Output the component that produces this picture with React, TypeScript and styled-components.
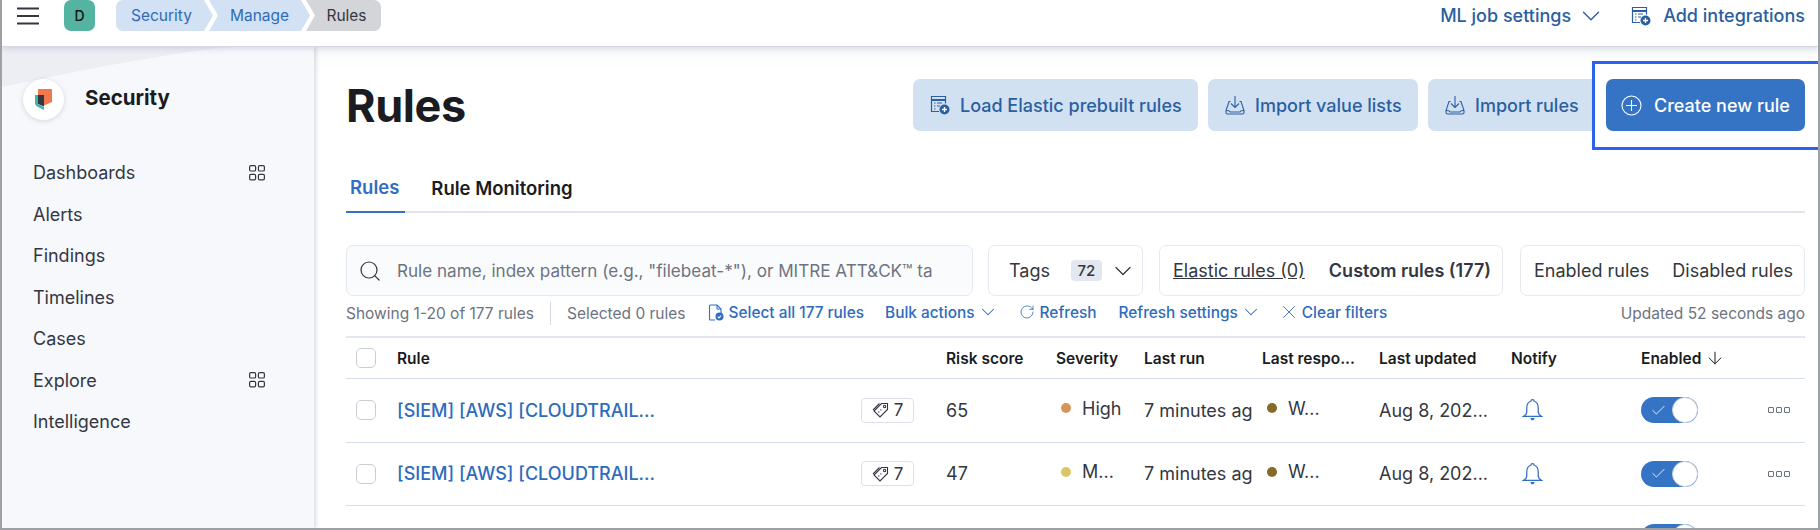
import React from "react";
import styled, { createGlobalStyle } from "styled-components";
import { ArrowDown, ChevronDown, RotateCw, Search, X, Check } from "lucide-react";

const GlobalStyle = createGlobalStyle`
    html, body {
        margin: 0;
        padding: 0;
        background: #fff;
        overflow: hidden;
    }
    * {
        box-sizing: border-box;
    }
`;

const SPage = styled.div`
    width: 1820px;
    height: 530px;
    display: flex;
    flex-direction: column;
    overflow: hidden;
    background: #fff;
    border-left: 2px solid #9da1a6;
    border-right: 2px solid #9da1a6;
    border-bottom: 2px solid #9da1a6;
    font-family: Inter, "Liberation Sans", sans-serif;
    color: #343741;
`;

const SHeader = styled.header`
    flex: 0 0 47px;
    display: flex;
    align-items: flex-start;
    padding: 0 13px 0 15px;
    background: #fff;
    border-bottom: 1px solid #d5d8e0;
    box-shadow: 0 2px 6px rgba(80, 90, 110, 0.18);
    position: relative;
    z-index: 2;
`;

const SMenuIcon = styled.svg`
    width: 22px;
    height: 18px;
    margin-top: 7px;
    color: #343741;
`;

const SAvatar = styled.div`
    width: 31px;
    height: 31px;
    margin-left: 25px;
    display: flex;
    align-items: center;
    justify-content: center;
    border-radius: 7px;
    background: #54b3a1;
    color: #111;
    font-size: 14px;
    font-weight: 500;
`;

const SCrumbs = styled.nav`
    display: flex;
    margin-left: 21px;
`;

const SCrumb = styled.span<{ $current?: boolean; $first?: boolean }>`
    height: 31px;
    display: flex;
    align-items: center;
    justify-content: center;
    font-size: 15.5px;
    margin-left: ${(p) => (p.$first ? 0 : -4)}px;
    width: ${(p) => (p.$first ? 97 : p.$current ? 75 : 101)}px;
    padding-left: ${(p) => (p.$first ? 0 : 6)}px;
    padding-right: ${(p) => (p.$current ? 0 : 6)}px;
    background: ${(p) => (p.$current ? "#d3d5d8" : "#d2e1f3")};
    color: ${(p) => (p.$current ? "#343741" : "#2f6cb9")};
    border-radius: ${(p) => (p.$first ? "7px 0 0 7px" : p.$current ? "0 7px 7px 0" : "0")};
    clip-path: ${(p) =>
        p.$first
            ? "polygon(0 0, calc(100% - 9px) 0, 100% 50%, calc(100% - 9px) 100%, 0 100%)"
            : p.$current
              ? "polygon(0 0, 100% 0, 100% 100%, 0 100%, 9px 50%)"
              : "polygon(0 0, calc(100% - 9px) 0, 100% 50%, calc(100% - 9px) 100%, 0 100%, 9px 50%)"};
`;

const SHeaderLinks = styled.div`
    margin-left: auto;
    display: flex;
    align-items: center;
    height: 31px;
    font-size: 18px;
    font-weight: 500;
    color: #2b5f9f;
`;

const SHeaderLink = styled.span<{ $gap: number }>`
    display: flex;
    align-items: center;
    gap: ${(p) => p.$gap}px;
    & + & {
        margin-left: 25px;
    }
`;

const SBody = styled.div`
    flex: 1;
    display: flex;
    min-height: 0;
`;

const SSidebar = styled.aside`
    flex: 0 0 312px;
    position: relative;
    background: #f6f8fc;
    box-shadow: 2px 0 4px rgba(80, 90, 110, 0.22);
    z-index: 1;
    overflow: hidden;
`;

const SSideWave = styled.svg`
    position: absolute;
    top: 0;
    left: 0;
    width: 312px;
    height: 60px;
`;

const SBrand = styled.div`
    display: flex;
    align-items: center;
    gap: 21px;
    padding: 32px 0 0 21px;
    position: relative;
    font-size: 20.5px;
    font-weight: 700;
    color: #1a1c21;
`;

const SBrandName = styled.span`
    margin-bottom: 4px;
`;

const SLogoCircle = styled.div`
    width: 41px;
    height: 41px;
    display: flex;
    align-items: center;
    justify-content: center;
    border-radius: 50%;
    background: #fff;
    box-shadow: 0 1px 5px rgba(80, 90, 110, 0.22);
`;

const SSideNav = styled.ul`
    list-style: none;
    margin: 32px 0 0;
    padding: 0 0 0 31px;
`;

const SSideItem = styled.li`
    height: 41.5px;
    width: 233px;
    display: flex;
    align-items: center;
    justify-content: space-between;
    font-size: 18px;
    color: #343741;
`;

const SGridIcon = styled.svg`
    width: 18px;
    height: 18px;
    color: #343741;
`;

const SMain = styled.main`
    flex: 1;
    min-width: 0;
    overflow: hidden;
    padding: 32px 13px 0 32px;
    background: linear-gradient(#f8f9fb, #fff 22px);
`;

const STitleRow = styled.div`
    display: flex;
    align-items: center;
    justify-content: space-between;
    height: 52px;
`;

const STitle = styled.h1`
    margin: 0;
    font-size: 45px;
    font-weight: 700;
    letter-spacing: -0.4px;
    color: #1a1c21;
`;

const SActions = styled.div`
    display: flex;
    gap: 10px;
`;

const SHighlight = styled.div`
    position: absolute;
    top: -18px;
    right: -13px;
    bottom: -19px;
    left: -14px;
    z-index: 0;
    border: 3px solid #2d62ee;
    border-right: none;
    background: #fff;
`;

const SActionWrap = styled.div`
    position: relative;
    margin-left: -7px;
`;

const SButton = styled.button<{ $primary?: boolean; $width: number }>`
    position: ${(p) => (p.$primary ? "relative" : "static")};
    z-index: ${(p) => (p.$primary ? 1 : "auto")};
    width: ${(p) => p.$width}px;
    height: 52px;
    display: flex;
    align-items: center;
    gap: ${(p) => (p.$primary ? 12 : 10)}px;
    padding: 0 0 0 ${(p) => (p.$primary ? 15 : 17)}px;
    border: none;
    border-radius: 7px;
    font-family: inherit;
    font-size: 18px;
    font-weight: 500;
    white-space: nowrap;
    background: ${(p) => (p.$primary ? "#3573c5" : "#d1e1f2")};
    color: ${(p) => (p.$primary ? "#fff" : "#2b5f9f")};
`;

const STabs = styled.div`
    display: flex;
    margin-top: 37px;
    height: 45px;
    border-bottom: 2px solid #dfe4ee;
`;

const STab = styled.div<{ $active?: boolean }>`
    height: 45px;
    padding: 0 ${(p) => (p.$active ? 6 : 0)}px 6px ${(p) => (p.$active ? 4 : 0)}px;
    margin-right: ${(p) => (p.$active ? 26 : 0)}px;
    display: flex;
    align-items: center;
    font-size: 18.5px;
    font-weight: 600;
    color: ${(p) => (p.$active ? "#2f6fc4" : "#1a1c21")};
    border-bottom: ${(p) => (p.$active ? "2px solid #3573c5" : "none")};
`;

const SFilters = styled.div`
    display: flex;
    margin-top: 32px;
    height: 51px;
`;

const SFilterBox = styled.div<{ $width: number; $gap?: number }>`
    flex: 0 0 ${(p) => p.$width}px;
    min-width: 0;
    margin-left: ${(p) => p.$gap ?? 0}px;
    display: flex;
    align-items: center;
    border: 1px solid #e6e9f2;
    border-radius: 7px;
    background: #fff;
    font-size: 18px;
    color: #343741;
`;

const SSearchBox = styled(SFilterBox)`
    background: #fafbfd;
    padding: 0 0 0 11px;
    gap: 15px;
`;

const SPlaceholder = styled.div`
    flex: 0 0 554px;
    overflow: hidden;
    white-space: nowrap;
    font-size: 17.1px;
    color: #6d7380;
`;

const STagsFilter = styled(SFilterBox)`
    padding: 0 5px 0 20px;
`;

const SCount = styled.span`
    width: 31px;
    height: 21px;
    margin-left: 21px;
    margin-right: auto;
    display: flex;
    align-items: center;
    justify-content: center;
    border-radius: 4px;
    background: #e3e7ef;
    font-size: 15px;
    font-weight: 500;
`;

const SToggleFilter = styled(SFilterBox)`
    justify-content: space-between;
    padding: 0 11px 0 13px;
`;

const SFilterText = styled.span<{ $on?: boolean; $under?: boolean }>`
    font-weight: ${(p) => (p.$on ? 600 : 400)};
    text-decoration: ${(p) => (p.$under ? "underline" : "none")};
    white-space: nowrap;
`;

const SInfoRow = styled.div`
    display: flex;
    align-items: center;
    height: 40px;
    padding-bottom: 6px;
    font-size: 15.5px;
    color: #6d7380;
    white-space: nowrap;
`;

const SDivider = styled.span`
    width: 1px;
    height: 23px;
    margin: 0 16px;
    background: #d5dae5;
`;

const SInfoLink = styled.span<{ $left: number; $gap?: number }>`
    display: flex;
    align-items: center;
    gap: ${(p) => p.$gap ?? 2}px;
    margin-left: ${(p) => p.$left}px;
    margin-top: -2px;
    color: #2e6bbd;
    font-weight: 500;
    font-size: 15.4px;
`;

const SUpdated = styled.span`
    margin-left: auto;
`;

const STable = styled.div`
    border-top: 2px solid #e1e6f0;
`;

const SRow = styled.div<{ $head?: boolean }>`
    display: grid;
    grid-template-columns: 51px 549px 110px 88px 118px 117px 132px 130px 127px 1fr;
    align-items: center;
    height: ${(p) => (p.$head ? 41 : 63.5)}px;
    border-bottom: 1px solid #d6deee;
    font-size: ${(p) => (p.$head ? 15.5 : 18)}px;
    font-weight: ${(p) => (p.$head ? 600 : 400)};
    color: ${(p) => (p.$head ? "#1a1c21" : "#343741")};
`;

const SCheckbox = styled.span`
    width: 20px;
    height: 20px;
    margin-left: 10px;
    display: block;
    border: 1px solid #c9ccd2;
    border-radius: 5px;
    background: #fff;
`;

const SRuleCell = styled.div`
    display: flex;
    align-items: center;
    justify-content: space-between;
    padding-right: 32px;
`;

const SRuleName = styled.span`
    color: #2e6bbd;
    font-weight: 500;
    font-size: 18px;
`;

const STagBadge = styled.span`
    width: 53px;
    height: 25px;
    display: flex;
    align-items: center;
    justify-content: center;
    gap: 4px;
    border: 1px solid #dde1ea;
    border-radius: 4px;
    font-size: 17px;
`;

const SStatus = styled.div`
    display: flex;
    align-items: center;
    gap: 11px;
    padding-left: 5px;
    margin-top: -4px;
`;

const SDot = styled.span<{ $color: string }>`
    width: 10px;
    height: 10px;
    border-radius: 50%;
    background: ${(p) => p.$color};
`;

const SClipCell = styled.div`
    width: 108px;
    overflow: hidden;
    white-space: nowrap;
`;

const SCell = styled.div`
    white-space: nowrap;
`;

const SHeadSort = styled.div`
    display: flex;
    align-items: center;
    gap: 4px;
`;

const SBell = styled.svg`
    width: 21px;
    height: 23px;
    margin-left: 11px;
    margin-top: -1px;
    color: #2f6fc4;
`;

const STagIcon = styled.svg`
    width: 18px;
    height: 18px;
    color: #343741;
`;

const SSwitch = styled.span`
    position: relative;
    width: 57px;
    height: 26px;
    display: flex;
    align-items: center;
    padding-left: 9px;
    border-radius: 13px;
    background: #3573c5;
    color: #fff;
`;

const SKnob = styled.span`
    position: absolute;
    top: 0;
    right: 0;
    width: 26px;
    height: 26px;
    border-radius: 50%;
    border: 1px solid #c9d1de;
    background: #fff;
`;

const SPartialSwitch = styled(SSwitch)`
    grid-column: 9;
`;

const SMore = styled.span`
    display: flex;
    gap: 2px;
`;

const SMoreDot = styled.span`
    width: 6px;
    height: 6px;
    border: 1px solid #69707d;
    border-radius: 1px;
`;

const MenuIcon = () => (
    <SMenuIcon viewBox="0 0 22 18" fill="none" stroke="currentColor" strokeWidth="2">
        <path d="M0 1.5h22M0 9h22M0 16.5h22" />
    </SMenuIcon>
);

const GridIcon = () => (
    <SGridIcon viewBox="0 0 18 18" fill="none" stroke="currentColor" strokeWidth="1.2">
        <rect x="1.6" y="1.6" width="6" height="5.4" rx="1.3" />
        <rect x="10.4" y="1.6" width="6" height="5.4" rx="1.3" />
        <rect x="1.6" y="10.4" width="6" height="5.4" rx="1.3" />
        <rect x="10.4" y="10.4" width="6" height="5.4" rx="1.3" />
    </SGridIcon>
);

const SecurityLogo = () => (
    <svg width="17" height="21" viewBox="0 0 17 21">
        <path d="M3 0h14v13l-8 3.5V6H3z" fill="#f0784f" />
        <path d="M3 6h6v11.5L3 15z" fill="#343741" />
        <path d="M0 6h3v9l6 3v3l-7-3.5L0 15z" fill="#3fb5a3" />
    </svg>
);

const IntegrationIcon = () => (
    <svg width="20" height="20" viewBox="0 0 20 20" fill="none" stroke="#2b5f9f" strokeWidth="1.2">
        <path d="M9 16.5H1.5v-15h14v7" />
        <path d="M1.5 5h14" strokeWidth="2" />
        <path d="M4 8h1.5M7 8h5M4 11h1.5M7 11h3M4 14h1.5" />
        <circle cx="14.5" cy="14.5" r="5" fill="#2b5f9f" stroke="none" />
        <path d="M14.5 12v5M12 14.5h5" stroke="#fff" strokeWidth="1.3" />
    </svg>
);

const ImportIcon = () => (
    <svg width="20" height="20" viewBox="0 0 20 20" fill="none" stroke="#2b5f9f" strokeWidth="1.1">
        <path d="M10 1v11M6 8.5l4 4 4-4" />
        <path d="M5.5 6.5H4L1 15.5v2a1.5 1.5 0 0 0 1.5 1.5h15a1.5 1.5 0 0 0 1.5-1.5v-2L16 6.5h-1.5" />
        <path d="M1 15.5c3 0 3 0 4 1.5h10c1-1.5 1-1.5 4-1.5" />
    </svg>
);

const SelectAllIcon = () => (
    <svg width="16" height="17" viewBox="0 0 16 17" fill="none" stroke="#2f6fc4" strokeWidth="1.1">
        <path d="M7 16H2.5a1 1 0 0 1-1-1V2a1 1 0 0 1 1-1H9l4 4v4" />
        <path d="M9 1v4h4" />
        <circle cx="11.5" cy="12.5" r="4" fill="#2f6fc4" stroke="none" />
        <path d="M9.7 12.6l1.3 1.3 2.2-2.4" stroke="#fff" />
    </svg>
);

const BellIcon = () => (
    <SBell viewBox="0 0 20 22" fill="none" stroke="currentColor" strokeWidth="1.2">
        <path d="M10 1.5c-.9 0-1.5.7-1.6 1.6C5.5 4 4.5 6.5 4.5 9.5v4c0 2-1.2 3-3 4h17c-1.8-1-3-2-3-4v-4c0-3-1-5.5-3.9-6.4-.1-.9-.7-1.6-1.6-1.6z" />
        <path d="M7.8 19.2h4.4l-1.3 2H9.1z" fill="currentColor" stroke="none" />
    </SBell>
);

const TagIcon = () => (
    <STagIcon viewBox="0 0 18 18" fill="none" stroke="currentColor" strokeWidth="1.1">
        <path d="M9.5 2.5h6v6L8 16l-6-6z" />
        <path d="M7.5 2.5 1 9" />
        <circle cx="12.6" cy="5.4" r="1.2" />
        <path d="M6.5 10.5l.8.8M8.5 8.5l.8.8" />
    </STagIcon>
);

const navItems = [
    { label: "Dashboards", grid: true },
    { label: "Alerts" },
    { label: "Findings" },
    { label: "Timelines" },
    { label: "Cases" },
    { label: "Explore", grid: true },
    { label: "Intelligence" },
];

const rules = [
    { score: 65, severity: "High", color: "#d6955a" },
    { score: 47, severity: "M...", color: "#d9c766" },
];

const RuleRow: React.FC<{ score: number; severity: string; color: string }> = ({ score, severity, color }) => (
    <SRow>
        <SCheckbox />
        <SRuleCell>
            <SRuleName>[SIEM] [AWS] [CLOUDTRAIL...</SRuleName>
            <STagBadge>
                <TagIcon />7
            </STagBadge>
        </SRuleCell>
        <SCell>{score}</SCell>
        <SStatus>
            <SDot $color={color} />
            {severity}
        </SStatus>
        <SClipCell>7 minutes ago</SClipCell>
        <SStatus>
            <SDot $color="#866a25" />
            W...
        </SStatus>
        <SCell>Aug 8, 202...</SCell>
        <BellIcon />
        <SSwitch>
            <Check size={17} strokeWidth={1.2} />
            <SKnob />
        </SSwitch>
        <SMore>
            <SMoreDot />
            <SMoreDot />
            <SMoreDot />
        </SMore>
    </SRow>
);

const App: React.FC = () => {
    return (
        <SPage>
            <GlobalStyle />
            <SHeader>
                <MenuIcon />
                <SAvatar>D</SAvatar>
                <SCrumbs>
                    <SCrumb $first>Security</SCrumb>
                    <SCrumb>Manage</SCrumb>
                    <SCrumb $current>Rules</SCrumb>
                </SCrumbs>
                <SHeaderLinks>
                    <SHeaderLink $gap={5}>
                        ML job settings <ChevronDown size={30} strokeWidth={1.1} />
                    </SHeaderLink>
                    <SHeaderLink $gap={12}>
                        <IntegrationIcon />
                        Add integrations
                    </SHeaderLink>
                </SHeaderLinks>
            </SHeader>
            <SBody>
                <SSidebar>
                    <SSideWave viewBox="0 0 312 60" preserveAspectRatio="none">
                        <path d="M0 0H230C170 5 70 25 0 40Z" fill="#eceef4" />
                    </SSideWave>
                    <SBrand>
                        <SLogoCircle>
                            <SecurityLogo />
                        </SLogoCircle>
                        <SBrandName>Security</SBrandName>
                    </SBrand>
                    <SSideNav>
                        {navItems.map((item) => (
                            <SSideItem key={item.label}>
                                {item.label}
                                {item.grid && <GridIcon />}
                            </SSideItem>
                        ))}
                    </SSideNav>
                </SSidebar>
                <SMain>
                    <STitleRow>
                        <STitle>Rules</STitle>
                        <SActions>
                            <SButton $width={285}>
                                <IntegrationIcon />
                                Load Elastic prebuilt rules
                            </SButton>
                            <SButton $width={210}>
                                <ImportIcon />
                                Import value lists
                            </SButton>
                            <SButton $width={175}>
                                <ImportIcon />
                                Import rules
                            </SButton>
                            <SActionWrap>
                                <SHighlight />
                                <SButton $primary $width={199}>
                                    <svg width="21" height="21" viewBox="0 0 21 21" fill="none" stroke="#fff" strokeWidth="1.1">
                                        <circle cx="10.5" cy="10.5" r="9.5" />
                                        <path d="M10.5 5v11M5 10.5h11" />
                                    </svg>
                                    Create new rule
                                </SButton>
                            </SActionWrap>
                        </SActions>
                    </STitleRow>
                    <STabs>
                        <STab $active>Rules</STab>
                        <STab>Rule Monitoring</STab>
                    </STabs>
                    <SFilters>
                        <SSearchBox $width={627}>
                            <Search size={24} strokeWidth={1.2} />
                            <SPlaceholder>Rule name, index pattern (e.g., "filebeat-*"), or MITRE ATT&amp;CK™ ta</SPlaceholder>
                        </SSearchBox>
                        <STagsFilter $width={155} $gap={15}>
                            Tags
                            <SCount>72</SCount>
                            <ChevronDown size={28} strokeWidth={1.1} />
                        </STagsFilter>
                        <SToggleFilter $width={344} $gap={16}>
                            <SFilterText $under>Elastic rules (0)</SFilterText>
                            <SFilterText $on>Custom rules (177)</SFilterText>
                        </SToggleFilter>
                        <SToggleFilter $width={285} $gap={17}>
                            <SFilterText>Enabled rules</SFilterText>
                            <SFilterText>Disabled rules</SFilterText>
                        </SToggleFilter>
                    </SFilters>
                    <SInfoRow>
                        Showing 1-20 of 177 rules
                        <SDivider />
                        Selected 0 rules
                        <SInfoLink $left={22} $gap={5}>
                            <SelectAllIcon />
                            Select all 177 rules
                        </SInfoLink>
                        <SInfoLink $left={21}>
                            Bulk actions <ChevronDown size={22} strokeWidth={1.1} />
                        </SInfoLink>
                        <SInfoLink $left={20} $gap={5}>
                            <RotateCw size={16} strokeWidth={1.2} />
                            Refresh
                        </SInfoLink>
                        <SInfoLink $left={22}>
                            Refresh settings <ChevronDown size={22} strokeWidth={1.1} />
                        </SInfoLink>
                        <SInfoLink $left={16}>
                            <X size={22} strokeWidth={1} />
                            Clear filters
                        </SInfoLink>
                        <SUpdated>Updated 52 seconds ago</SUpdated>
                    </SInfoRow>
                    <STable>
                        <SRow $head>
                            <SCheckbox />
                            <SCell>Rule</SCell>
                            <SCell>Risk score</SCell>
                            <SCell>Severity</SCell>
                            <SCell>Last run</SCell>
                            <SCell>Last respo...</SCell>
                            <SCell>Last updated</SCell>
                            <SCell>Notify</SCell>
                            <SHeadSort>
                                Enabled <ArrowDown size={20} strokeWidth={1.2} />
                            </SHeadSort>
                            <span />
                        </SRow>
                        {rules.map((rule) => (
                            <RuleRow key={rule.score} {...rule} />
                        ))}
                        <SRow>
                            <SPartialSwitch>
                                <SKnob />
                            </SPartialSwitch>
                        </SRow>
                    </STable>
                </SMain>
            </SBody>
        </SPage>
    );
};

export default App;
